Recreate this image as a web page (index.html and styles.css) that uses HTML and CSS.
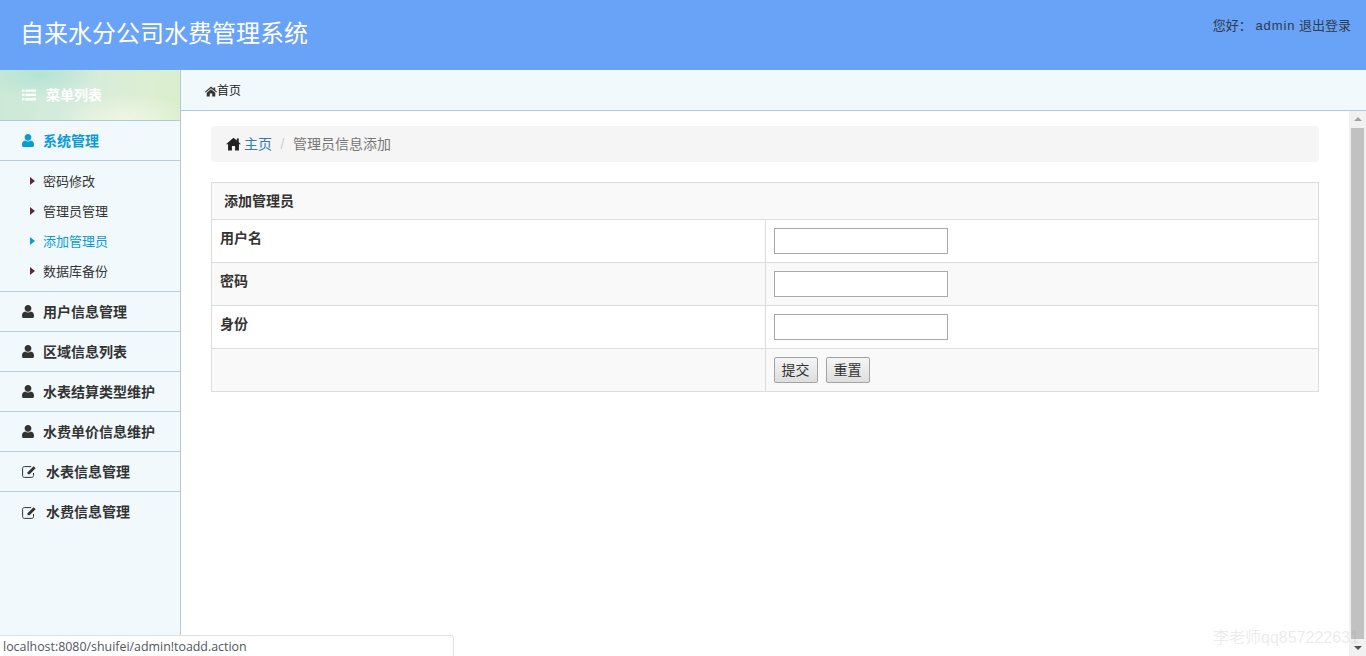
FILE: index.html
```html
<!DOCTYPE html>
<html lang="zh-CN">
<head>
<meta charset="utf-8">
<title>自来水分公司水费管理系统</title>
<link rel="stylesheet" href="styles.css">
</head>
<body>
<svg class="defs" width="0" height="0" aria-hidden="true">
  <symbol id="i-user" viewBox="0 0 12 13"><path d="M6 0C8 0 9.4 1.4 9.4 3.3C9.4 5.2 8 6.7 6 6.7C4 6.7 2.6 5.2 2.6 3.3C2.6 1.4 4 0 6 0ZM3.2 6.6C4 7.2 5 7.6 6 7.6C7 7.6 8 7.2 8.8 6.6C10.8 6.9 12 8.4 12 10.4V11.6C12 12.4 11.4 13 10.6 13H1.4C0.6 13 0 12.4 0 11.6V10.4C0 8.4 1.2 6.9 3.2 6.6Z"/></symbol>
  <symbol id="i-edit" viewBox="0 0 15 13"><path class="edit-box" d="M11.5 8V10.6C11.5 11.7 10.7 12.4 9.7 12.4H2.4C1.3 12.4 0.6 11.7 0.6 10.6V3.4C0.6 2.3 1.3 1.6 2.4 1.6H9.2"/><path d="M5.6 7.2L11.6 1.2L13.6 3.2L7.6 9.2H5.6Z"/></symbol>
</svg>
<header class="topbar">
  <h1 class="brand">自来水分公司水费管理系统</h1>
  <div class="welcome">您好： <span class="welcome-name">admin</span> 退出登录</div>
</header>
<div class="shell">
  <aside class="sidebar">
    <div class="side-title">
      <svg class="i-list" viewBox="0 0 14 12" width="14" height="12"><path d="M0 0.5H2.5V2.8H0ZM3.5 0.5H14V2.8H3.5ZM0 4.8H2.5V7.1H0ZM3.5 4.8H14V7.1H3.5ZM0 9.1H2.5V11.4H0ZM3.5 9.1H14V11.4H3.5Z"/></svg>
      <span>菜单列表</span>
    </div>
    <nav>
      <div class="group group-active"><svg class="i-user"><use href="#i-user"/></svg><span>系统管理</span></div>
      <ul class="submenu">
        <li>密码修改</li>
        <li>管理员管理</li>
        <li class="current">添加管理员</li>
        <li>数据库备份</li>
      </ul>
      <div class="group"><svg class="i-user"><use href="#i-user"/></svg><span>用户信息管理</span></div>
      <div class="group"><svg class="i-user"><use href="#i-user"/></svg><span>区域信息列表</span></div>
      <div class="group"><svg class="i-user"><use href="#i-user"/></svg><span>水表结算类型维护</span></div>
      <div class="group"><svg class="i-user"><use href="#i-user"/></svg><span>水费单价信息维护</span></div>
      <div class="group"><svg class="i-edit"><use href="#i-edit"/></svg><span>水表信息管理</span></div>
      <div class="group group-last"><svg class="i-edit"><use href="#i-edit"/></svg><span>水费信息管理</span></div>
    </nav>
  </aside>
  <main class="workspace">
    <div class="tabs">
      <svg class="i-tabhome" viewBox="0 0 14 12" width="12" height="11"><path d="M7 0.3L10 2.8V1.2H11.9V4.4L14 6.2L13.2 7.2L7 2.1L0.8 7.2L0 6.2ZM2 7.4L7 3.3L12 7.4V11.8H8.4V8.4H5.6V11.8H2Z"/></svg><span>首页</span>
    </div>
    <div class="pane">
      <div class="page">
        <div class="crumbs">
          <svg class="i-home" viewBox="0 0 16 14" width="15" height="14"><path d="M8 0.3L11.5 3.3V1.2H13.6V5.1L16 7.2H13.8V13.8H9.7V9H6.3V13.8H2.2V7.2H0Z"/></svg>
          <a class="crumb-link">主页</a><span class="crumb-sep">/</span><span class="crumb-now">管理员信息添加</span>
        </div>
        <table class="form-table">
          <thead><tr><th colspan="2">添加管理员</th></tr></thead>
          <tbody>
            <tr><td class="label">用户名</td><td class="field"><input type="text"></td></tr>
            <tr><td class="label">密码</td><td class="field"><input type="text"></td></tr>
            <tr><td class="label">身份</td><td class="field"><input type="text"></td></tr>
            <tr><td class="label"></td><td class="field actions"><button type="button">提交</button><button type="button">重置</button></td></tr>
          </tbody>
        </table>
      </div>
      <div class="scrollbar">
        <span class="arrow arrow-up"></span>
        <div class="track"><div class="thumb"></div></div>
        <span class="arrow arrow-down"></span>
      </div>
    </div>
  </main>
</div>
<div class="statusbar">localhost:8080/shuifei/admin!toadd.action</div>
<div class="watermark">李老师qq857222631</div>
</body>
</html>
```

FILE: styles.css
```css
* { box-sizing: border-box; }
html, body { margin: 0; height: 656px; overflow: hidden; }
body {
  display: flex;
  flex-direction: column;
  background: #fff;
  color: #333;
  font: 14px/20px "Liberation Sans", "Noto Sans CJK SC", sans-serif;
}
.defs { position: absolute; }

.topbar {
  flex: 0 0 70px;
  display: flex;
  justify-content: space-between;
  background: #68a3f8;
}
.brand {
  margin: 0;
  padding: 19px 0 0 20px;
  color: #fff;
  font-size: 24px;
  line-height: 30px;
  font-weight: 400;
}
.welcome {
  padding: 16px 15px 0 0;
  font-size: 13px;
  line-height: 20px;
  color: #2f3a4d;
  white-space: pre-wrap;
}
.welcome-name { letter-spacing: 0.9px; }

.shell { flex: 1; display: flex; min-height: 0; }

.sidebar {
  flex: 0 0 181px;
  background: #f1f9fd;
  border-right: 1px solid #aecbdb;
}
.side-title {
  height: 51px;
  display: flex;
  align-items: center;
  gap: 10px;
  padding-left: 22px;
  color: #fff;
  font-weight: 700;
  border-bottom: 1px solid #aecbdb;
  background:
    radial-gradient(ellipse 70px 26px at 125px 50px, #f0f6e4 0%, rgba(240,246,228,0) 100%),
    radial-gradient(ellipse 60px 24px at 40px 4px, #b4e3d5 0%, rgba(180,227,213,0) 100%),
    linear-gradient(100deg, #cbe8d6 0%, #d6ecdc 45%, #dcefd2 80%, #d9eecb 100%);
}
.i-list { fill: #fff; flex: none; }

.group {
  height: 40px;
  display: flex;
  align-items: center;
  gap: 9px;
  padding-left: 22px;
  font-weight: 700;
  color: #333;
  border-bottom: 1px solid #b8d0dc;
}
.group-last { border-bottom: 0; }
.group-active { color: #0a9bd0; }
.i-user { width: 12px; height: 13px; fill: currentColor; flex: none; }
.i-edit { width: 15px; height: 13px; fill: #333; flex: none; }
.edit-box { fill: none; stroke: #333; stroke-width: 1; }

.submenu {
  margin: 0;
  padding: 5px 0;
  list-style: none;
  border-bottom: 1px solid #b8d0dc;
}
.submenu li {
  position: relative;
  height: 30px;
  line-height: 31px;
  padding-left: 43px;
  font-size: 13px;
  color: #333;
}
.submenu li::before {
  content: "";
  position: absolute;
  left: 30px;
  top: 11px;
  border-left: 5px solid #5a2a35;
  border-top: 4px solid transparent;
  border-bottom: 4px solid transparent;
}
.submenu .current { color: #0a9bd0; }
.submenu .current::before { border-left-color: #0a9bd0; }

.workspace { flex: 1; min-width: 0; display: flex; flex-direction: column; }
.tabs {
  flex: 0 0 41px;
  display: flex;
  align-items: center;
  padding: 2px 0 0 24px;
  background: #f1f9fd;
  border-bottom: 1px solid #aecbdb;
  font-size: 12px;
  color: #222;
}
.i-tabhome { fill: #333; }

.pane { flex: 1; min-height: 0; display: flex; }
.page { flex: 1; min-width: 0; padding: 15px 30px 0; }

.crumbs {
  height: 36px;
  display: flex;
  align-items: center;
  padding-left: 15px;
  margin-bottom: 20px;
  background: #f5f5f5;
  border-radius: 4px;
  color: #777;
}
.i-home { fill: #222; margin-right: 3px; }
.crumb-link { color: #337ab7; }
.crumb-sep { padding: 0 8.5px; color: #ccc; }

.form-table {
  width: 100%;
  table-layout: fixed;
  border-collapse: collapse;
  border: 1px solid #ddd;
}
.form-table th {
  height: 37px;
  padding: 0 12px;
  text-align: left;
  font-weight: 700;
  background: #f9f9f9;
  border: 1px solid #ddd;
}
.form-table td { height: 43px; padding: 8px; vertical-align: top; border: 1px solid #ddd; }
.form-table tbody tr:nth-child(even) td { background: #f9f9f9; }
.label { font-weight: 700; line-height: 20px; }
.field { line-height: 0; }
.field input {
  display: block;
  width: 174px;
  height: 26px;
  padding: 0 4px;
  border: 1px solid #a9a9a9;
  background: #fff;
  outline: none;
}
.actions button {
  width: 44px;
  height: 26px;
  margin-right: 8px;
  padding: 0;
  border: 1px solid #a3a3a3;
  border-radius: 2px;
  background: linear-gradient(#f5f5f5, #dedede);
  color: #333;
  font: 14px/20px "Liberation Sans", "Noto Sans CJK SC", sans-serif;
}

.scrollbar {
  flex: 0 0 17px;
  display: flex;
  flex-direction: column;
  align-items: center;
  background: #f1f1f1;
}
.arrow { width: 0; height: 0; flex: none; }
.arrow-up {
  margin-top: 6px;
  border-left: 4px solid transparent;
  border-right: 4px solid transparent;
  border-bottom: 4px solid #a3a3a3;
}
.arrow-down {
  margin-bottom: 6px;
  border-left: 4px solid transparent;
  border-right: 4px solid transparent;
  border-top: 4px solid #505050;
}
.track { flex: 1; width: 100%; padding: 7px 2px 7px; }
.thumb { height: 100%; background: #c1c1c1; }

.statusbar {
  position: absolute;
  left: 0;
  bottom: 0;
  width: 454px;
  height: 21px;
  padding-left: 3px;
  background: #fff;
  border: 1px solid #dee1e6;
  border-width: 1px 1px 0 0;
  border-top-right-radius: 4px;
  color: #50565c;
  font: 12.4px/22px "Open Sans", "Liberation Sans", sans-serif;
}
.watermark {
  position: absolute;
  left: 1213px;
  top: 628px;
  color: rgba(150, 150, 150, 0.2);
  font-size: 16px;
  line-height: 20px;
  white-space: nowrap;
}
```
